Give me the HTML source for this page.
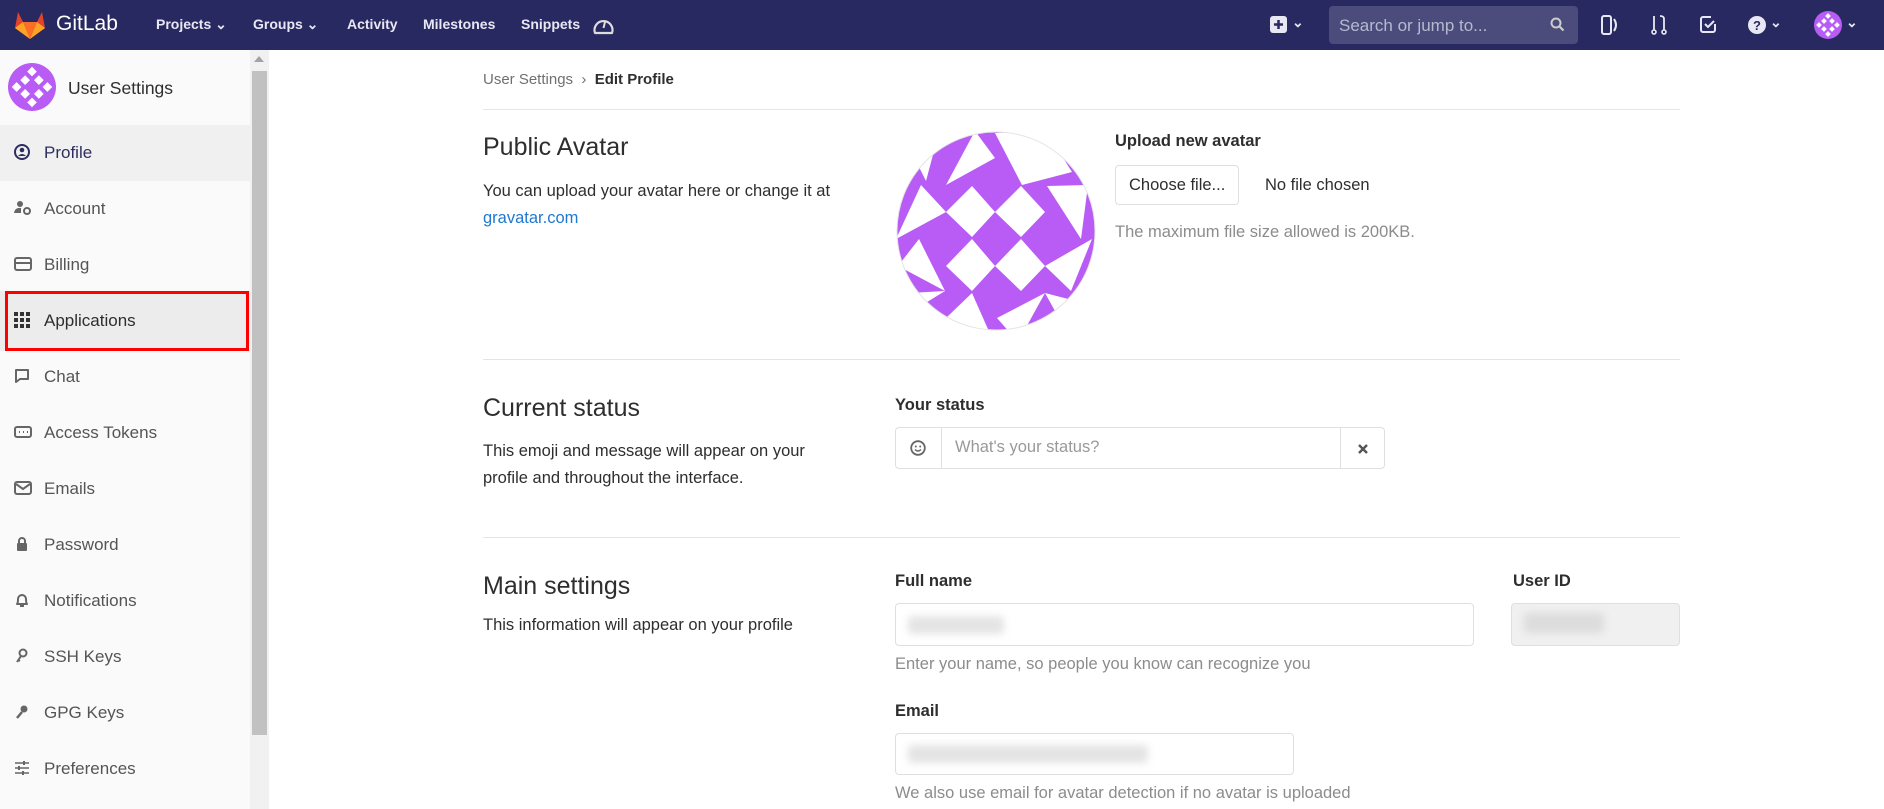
<!DOCTYPE html>
<html><head><meta charset="utf-8">
<style>
*{box-sizing:border-box;margin:0;padding:0}
body{width:1884px;height:809px;overflow:hidden;background:#fff;font-family:"Liberation Sans",sans-serif;color:#2e2e2e;position:relative}
.nav{position:absolute;left:0;top:0;width:1884px;height:50px;background:#292961}
.nav .t{position:absolute;top:16px;color:#e8e8f4;font-size:14px;font-weight:bold}
.side{position:absolute;left:0;top:50px;width:250px;height:759px;background:#fafafa}
.sb{position:absolute;left:250px;top:50px;width:19px;height:759px;background:#f1f1f1}
.thumb{position:absolute;left:252px;top:71px;width:15px;height:664px;background:#c1c1c1}
.item{position:absolute;left:0;width:250px;height:56px;font-size:17px;color:#555}
.item span{position:absolute;left:44px;top:18px}
.item svg{position:absolute;left:14px;top:19px}
.abs{position:absolute}
.h{font-size:25px;color:#2e2e2e}
.p{font-size:16.5px;color:#2e2e2e}
.lbl{font-size:16.5px;font-weight:bold;color:#2e2e2e}
.help{font-size:16.5px;color:#8c8c8c}
.line{position:absolute;left:483px;width:1197px;height:1px;background:#e5e5e5}
.inp{position:absolute;border:1px solid #dfdfdf;border-radius:4px;background:#fff}
.blur{position:absolute;background:#e4e4e4;filter:blur(4px);border-radius:4px}
</style></head><body>
<div class="nav">
  <svg class="abs" style="left:14px;top:10px" width="32" height="30" viewBox="0 0 32 30"><path d="M16 29 L1 18 L4 2 L9 12 Z" fill="#e24329"/><path d="M16 29 L31 18 L28 2 L23 12 Z" fill="#e24329"/><path d="M16 29 L9 12 L23 12 Z" fill="#fc6d26"/><path d="M1 18 L9 12 L16 29Z" fill="#fca326"/><path d="M31 18 L23 12 L16 29Z" fill="#fca326"/></svg>
  <div class="abs" style="left:56px;top:12px;font-size:21px;color:#fff">GitLab</div>
  <div class="t" style="left:156px">Projects ⌄</div>
  <div class="t" style="left:253px">Groups ⌄</div>
  <div class="t" style="left:347px">Activity</div>
  <div class="t" style="left:423px">Milestones</div>
  <div class="t" style="left:521px">Snippets</div>
  <svg class="abs" style="left:592px;top:14px" width="23" height="21" viewBox="0 0 23 21"><path d="M3 19 A9 9 0 1 1 20 19 Z" fill="none" stroke="#ddd" stroke-width="2.2" stroke-linejoin="round"/><path d="M11.5 14 L13 8" stroke="#ddd" stroke-width="2"/></svg>
  <svg class="abs" style="left:1270px;top:16px" width="17" height="17"><rect width="17" height="17" rx="3" fill="#e8e8f4"/><path d="M8.5 4v9M4 8.5h9" stroke="#292961" stroke-width="2.5"/></svg>
  <div class="t" style="left:1292px;top:14px">⌄</div>
  <div class="abs" style="left:1329px;top:6px;width:249px;height:38px;background:#4b4b7c;border-radius:4px"></div>
  <div class="abs" style="left:1339px;top:16px;font-size:17px;color:#b8b8d0">Search or jump to...</div>
  <svg class="abs" style="left:1550px;top:17px" width="15" height="15"><circle cx="6" cy="6" r="4.5" fill="none" stroke="#ccc" stroke-width="2"/><path d="M9.5 9.5l4 4" stroke="#ccc" stroke-width="2.2"/></svg>
  <svg class="abs" style="left:1601px;top:15px" width="18" height="20"><rect x="1" y="1" width="9" height="18" rx="2" fill="none" stroke="#e8e8f4" stroke-width="2"/><path d="M13 4 q4 6 0 12" fill="none" stroke="#e8e8f4" stroke-width="2"/></svg>
  <svg class="abs" style="left:1651px;top:13px" width="16" height="22"><circle cx="3" cy="19" r="2" fill="none" stroke="#e8e8f4" stroke-width="1.6"/><circle cx="13" cy="19" r="2" fill="none" stroke="#e8e8f4" stroke-width="1.6"/><path d="M3 17V3M13 17V6Q13 3 9 3" fill="none" stroke="#e8e8f4" stroke-width="1.8"/></svg>
  <svg class="abs" style="left:1700px;top:16px" width="17" height="17"><path d="M15 8v6a2 2 0 0 1-2 2H3a2 2 0 0 1-2-2V3a2 2 0 0 1 2-2h8" fill="none" stroke="#e8e8f4" stroke-width="2"/><path d="M5 8l3 3 6-6" fill="none" stroke="#e8e8f4" stroke-width="2"/></svg>
  <svg class="abs" style="left:1748px;top:16px" width="18" height="18"><circle cx="9" cy="9" r="9" fill="#e8e8f4"/><text x="9" y="14" font-size="13" font-weight="bold" text-anchor="middle" fill="#292961" font-family="Liberation Sans">?</text></svg>
  <div class="t" style="left:1770px;top:14px">⌄</div>
  <svg class="abs" style="left:1814px;top:11px" width="28" height="28" viewBox="0 0 28 28"><circle cx="14" cy="14" r="14" fill="#b85cf5"/><g fill="#fff"><rect x="8" y="8" width="4" height="4" transform="rotate(45 10 10)"/><rect x="16" y="8" width="4" height="4" transform="rotate(45 18 10)"/><rect x="8" y="16" width="4" height="4" transform="rotate(45 10 18)"/><rect x="16" y="16" width="4" height="4" transform="rotate(45 18 18)"/><rect x="12" y="3" width="4" height="4" transform="rotate(45 14 5)"/><rect x="12" y="21" width="4" height="4" transform="rotate(45 14 23)"/><rect x="3" y="12" width="4" height="4" transform="rotate(45 5 14)"/><rect x="21" y="12" width="4" height="4" transform="rotate(45 23 14)"/></g></svg>
  <div class="t" style="left:1846px;top:14px">⌄</div>
</div>

<div class="side">
  <svg class="abs" style="left:8px;top:13px" width="48" height="48" viewBox="0 0 28 28"><circle cx="14" cy="14" r="14" fill="#b85cf5"/><g fill="#fff"><rect x="8" y="8" width="4" height="4" transform="rotate(45 10 10)"/><rect x="16" y="8" width="4" height="4" transform="rotate(45 18 10)"/><rect x="8" y="16" width="4" height="4" transform="rotate(45 10 18)"/><rect x="16" y="16" width="4" height="4" transform="rotate(45 18 18)"/><rect x="12" y="3" width="4" height="4" transform="rotate(45 14 5)"/><rect x="12" y="21" width="4" height="4" transform="rotate(45 14 23)"/><rect x="3" y="12" width="4" height="4" transform="rotate(45 5 14)"/><rect x="21" y="12" width="4" height="4" transform="rotate(45 23 14)"/></g></svg>
  <div class="abs" style="left:68px;top:28px;font-size:17.5px;color:#2e2e2e">User Settings</div>
  <div class="item" style="top:75px;background:#f0f0f0;color:#2e2e2e;height:56px"><svg width="16" height="16"><circle cx="8" cy="8" r="7" fill="none" stroke="#2e2e5e" stroke-width="2"/><circle cx="8" cy="6" r="2.3" fill="#2e2e5e"/><path d="M4 12q4-4 8 0" fill="#2e2e5e"/></svg><span style="color:#2e2e5e">Profile</span></div>
  <div class="item" style="top:131px"><svg width="18" height="16"><circle cx="6" cy="4" r="3" fill="#666"/><path d="M0 13q1-6 7-5v5z" fill="#666"/><circle cx="13" cy="11" r="3" fill="none" stroke="#666" stroke-width="2"/></svg><span>Account</span></div>
  <div class="item" style="top:187px"><svg width="18" height="16"><rect x="1" y="2" width="16" height="12" rx="2" fill="none" stroke="#666" stroke-width="2"/><path d="M1 7h16" stroke="#666" stroke-width="2"/></svg><span>Billing</span></div>
  <div class="item" style="top:241px;background:#ececec;color:#2e2e2e;height:60px"><svg width="16" height="16" style="top:21px"><g fill="#333"><rect x="0" y="0" width="4" height="4"/><rect x="6" y="0" width="4" height="4"/><rect x="12" y="0" width="4" height="4"/><rect x="0" y="6" width="4" height="4"/><rect x="6" y="6" width="4" height="4"/><rect x="12" y="6" width="4" height="4"/><rect x="0" y="12" width="4" height="4"/><rect x="6" y="12" width="4" height="4"/><rect x="12" y="12" width="4" height="4"/></g></svg><span style="top:20px;color:#2e2e2e">Applications</span></div>
  <div class="abs" style="left:5px;top:241px;width:244px;height:60px;border:3px solid #f00"></div>
  <div class="item" style="top:299px"><svg width="16" height="16"><path d="M2 2h12v9H6l-4 3z" fill="none" stroke="#666" stroke-width="2" stroke-linejoin="round"/></svg><span>Chat</span></div>
  <div class="item" style="top:355px"><svg width="18" height="16"><rect x="1" y="3" width="16" height="10" rx="2" fill="none" stroke="#666" stroke-width="2"/><path d="M5 8h1M9 8h1M13 8h1" stroke="#666" stroke-width="2"/></svg><span>Access Tokens</span></div>
  <div class="item" style="top:411px"><svg width="18" height="16"><rect x="1" y="2" width="16" height="12" rx="2" fill="none" stroke="#666" stroke-width="2"/><path d="M2 4l7 5 7-5" fill="none" stroke="#666" stroke-width="2"/></svg><span>Emails</span></div>
  <div class="item" style="top:467px"><svg width="16" height="16"><rect x="3" y="7" width="10" height="8" rx="1" fill="#666"/><path d="M5 7V5a3 3 0 0 1 6 0v2" fill="none" stroke="#666" stroke-width="2"/></svg><span>Password</span></div>
  <div class="item" style="top:523px"><svg width="16" height="16"><path d="M3 12q1-1 1-5a4 4 0 0 1 8 0q0 4 1 5z" fill="none" stroke="#666" stroke-width="2" stroke-linejoin="round"/><path d="M6 14h4" stroke="#666" stroke-width="2"/></svg><span>Notifications</span></div>
  <div class="item" style="top:579px"><svg width="16" height="16"><circle cx="9" cy="5" r="3.5" fill="none" stroke="#666" stroke-width="2"/><path d="M7 8l-4 6M4 12l2 1" stroke="#666" stroke-width="2"/></svg><span>SSH Keys</span></div>
  <div class="item" style="top:635px"><svg width="16" height="16"><circle cx="10" cy="5" r="3.5" fill="#666"/><path d="M8 8l-5 6" stroke="#666" stroke-width="2.5"/></svg><span>GPG Keys</span></div>
  <div class="item" style="top:691px"><svg width="16" height="16"><path d="M1 3h14M1 8h14M1 13h14" stroke="#666" stroke-width="1.6"/><path d="M10 1v4M5 6v4M9 11v4" stroke="#666" stroke-width="2"/></svg><span>Preferences</span></div>
</div>
<div class="sb"></div>
<div class="abs" style="left:254px;top:56px;width:0;height:0;border-left:5px solid transparent;border-right:5px solid transparent;border-bottom:6px solid #a3a3a3"></div>
<div class="thumb"></div>

<div class="abs" style="left:483px;top:71px;font-size:15px;color:#707070">User Settings &nbsp;›&nbsp; <span style="color:#2e2e2e;font-weight:bold">Edit Profile</span></div>
<div class="line" style="top:109px"></div>

<div class="abs h" style="left:483px;top:133px">Public Avatar</div>
<div class="abs p" style="left:483px;top:178px;line-height:27px">You can upload your avatar here or change it at<br><span style="color:#1f78d1">gravatar.com</span></div>
<svg class="abs" style="left:896px;top:131px" width="200" height="200" viewBox="0 0 200 200">
<defs><clipPath id="c"><circle cx="100" cy="100" r="99"/></clipPath></defs>
<g clip-path="url(#c)"><rect width="200" height="200" fill="#b85cf5"/>
<g fill="#fff">
<path d="M76 55 L99 81 L76 106 L50 81Z"/><path d="M125 55 L149 81 L125 106 L99 81Z"/>
<path d="M76 108 L99 135 L76 160 L50 135Z"/><path d="M125 108 L149 135 L125 160 L99 135Z"/>
<path d="M50 54 L79 0 L99 27Z"/><path d="M99 2 L126 54 L176 41 L150 0Z"/>
<path d="M151 55 L185 108 L192 54Z"/><path d="M25 54 L0 108 L50 81Z"/>
<path d="M23 108 L2 135 L49 160Z"/><path d="M149 135 L196 108 L175 160Z"/>
<path d="M50 187 L76 162 L99 214Z"/><path d="M101 187 L149 162 L122 211Z"/>
<path d="M149 162 L164 189 L180 170Z"/><path d="M13 162 L49 160 L23 176Z"/>
<path d="M20 30 L38 20 L30 50Z"/>
</g></g>
<circle cx="100" cy="100" r="99" fill="none" stroke="#e4e4e4"/></svg>
<div class="abs lbl" style="left:1115px;top:132px">Upload new avatar</div>
<div class="inp" style="left:1115px;top:165px;width:124px;height:40px;border-radius:4px"></div>
<div class="abs p" style="left:1129px;top:176px">Choose file...</div>
<div class="abs p" style="left:1265px;top:176px">No file chosen</div>
<div class="abs help" style="left:1115px;top:223px">The maximum file size allowed is 200KB.</div>

<div class="line" style="top:359px"></div>
<div class="abs h" style="left:483px;top:394px">Current status</div>
<div class="abs p" style="left:483px;top:438px;line-height:27px">This emoji and message will appear on your<br>profile and throughout the interface.</div>
<div class="abs lbl" style="left:895px;top:396px">Your status</div>
<div class="inp" style="left:895px;top:427px;width:490px;height:42px"></div>
<div class="abs" style="left:941px;top:428px;width:1px;height:40px;background:#dfdfdf"></div>
<div class="abs" style="left:1340px;top:428px;width:1px;height:40px;background:#dfdfdf"></div>
<svg class="abs" style="left:910px;top:440px" width="16" height="16"><circle cx="8" cy="8" r="6.8" fill="none" stroke="#666" stroke-width="1.8"/><circle cx="5.8" cy="6.5" r="1" fill="#666"/><circle cx="10.2" cy="6.5" r="1" fill="#666"/><path d="M5 9.5q3 3 6 0" fill="none" stroke="#666" stroke-width="1.5"/></svg>
<div class="abs p" style="left:955px;top:438px;color:#999">What's your status?</div>
<svg class="abs" style="left:1357px;top:443px" width="12" height="12"><path d="M2 2l8 8M10 2l-8 8" stroke="#555" stroke-width="2.4"/></svg>

<div class="line" style="top:537px"></div>
<div class="abs h" style="left:483px;top:572px">Main settings</div>
<div class="abs p" style="left:483px;top:616px">This information will appear on your profile</div>
<div class="abs lbl" style="left:895px;top:572px">Full name</div>
<div class="inp" style="left:895px;top:603px;width:579px;height:43px"></div>
<div class="blur" style="left:908px;top:616px;width:96px;height:18px"></div>
<div class="abs help" style="left:895px;top:655px">Enter your name, so people you know can recognize you</div>
<div class="abs lbl" style="left:1513px;top:572px">User ID</div>
<div class="inp" style="left:1511px;top:603px;width:169px;height:43px;background:#f0f0f0"></div>
<div class="blur" style="left:1524px;top:613px;width:80px;height:20px;background:#dcdcdc"></div>
<div class="abs lbl" style="left:895px;top:702px">Email</div>
<div class="inp" style="left:895px;top:733px;width:399px;height:42px"></div>
<div class="blur" style="left:908px;top:745px;width:240px;height:18px"></div>
<div class="abs help" style="left:895px;top:784px">We also use email for avatar detection if no avatar is uploaded</div>
</body></html>
